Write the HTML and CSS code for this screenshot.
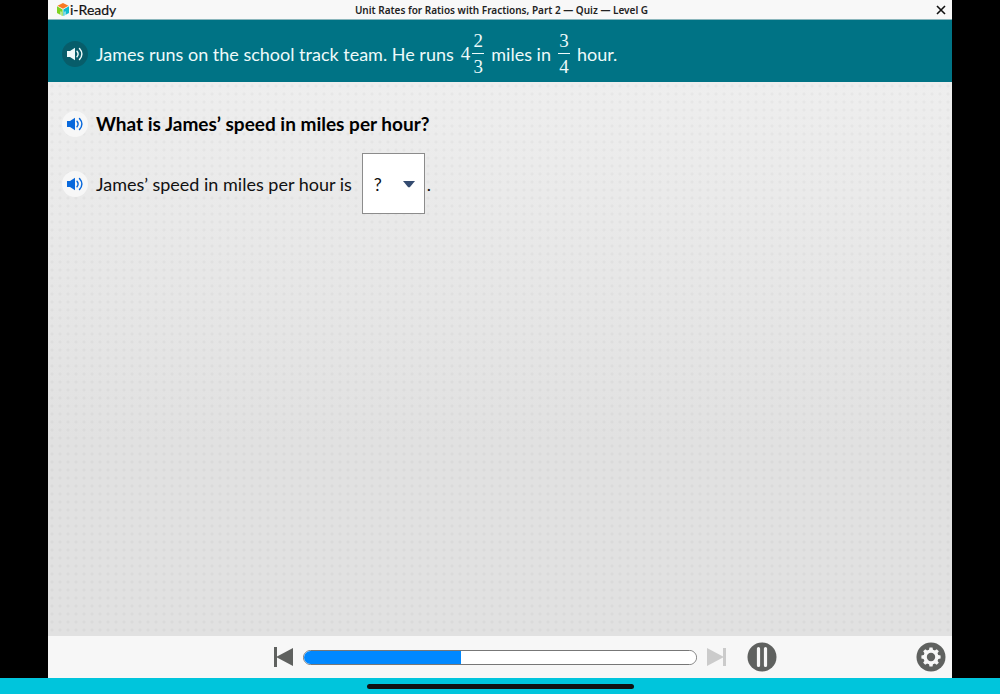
FILE: index.html
```html
<!DOCTYPE html>
<html lang="en">
<head>
<meta charset="utf-8">
<meta name="viewport" content="width=device-width, initial-scale=1">
<title>i-Ready Quiz</title>
<link rel="stylesheet" href="styles.css">
</head>
<body>
<svg class="defs" aria-hidden="true">
  <symbol id="speaker" viewBox="0 0 16 14">
    <path fill="currentColor" d="M0 4H3L8 .8V13.200L3 10H0Z"/>
    <path fill="none" stroke="currentColor" stroke-width="1.400" stroke-linecap="round" d="M10 4.200Q12.200 7 10 9.800M12.500 1.500Q17.300 7 12.500 12.500"/>
  </symbol>
</svg>
<div class="app">
  <header class="topbar">
    <div class="brand">
      <svg class="brand-mark" viewBox="0 0 12 13" aria-hidden="true">
        <path fill="#fb7a24" d="M6 0 11.500 2.800 6 5.800.5 2.800Z"/>
        <path fill="#7ed321" d="M0 3.300 5.600 6.400V13L0 9.900Z"/>
        <path fill="#10bcd0" d="M12 3.300 6.400 6.400V13L12 9.900Z"/>
        <path fill="#f8f8f8" d="M3.500 8.300 4.500 8.800V12.400L3.500 11.900ZM8.500 8.300 7.500 8.800V12.400L8.500 11.900Z"/>
      </svg>
      <span>i-Ready</span>
    </div>
    <h1 class="title">Unit Rates for Ratios with Fractions, Part 2 — Quiz — Level G</h1>
    <button class="close" aria-label="Close">
      <svg viewBox="0 0 10 10" aria-hidden="true"><path d="M1 1 9 9M9 1 1 9" stroke="currentColor" stroke-width="1.600"/></svg>
    </button>
  </header>

  <section class="prompt">
    <button class="audio audio-dark" aria-label="Read problem aloud"><svg aria-hidden="true"><use href="#speaker"/></svg></button>
    <p class="line">
      <span>James runs on the school track team. He runs</span>
      <span class="mixed">4<span class="fraction"><span class="top">2</span><span>3</span></span></span>
      <span>miles in</span>
      <span class="fraction"><span class="top">3</span><span>4</span></span>
      <span>hour.</span>
    </p>
  </section>

  <main class="work">
    <div class="row">
      <button class="audio" aria-label="Read question aloud"><svg aria-hidden="true"><use href="#speaker"/></svg></button>
      <h2 class="question">What is James’ speed in miles per hour?</h2>
    </div>
    <div class="row">
      <button class="audio" aria-label="Read answer aloud"><svg aria-hidden="true"><use href="#speaker"/></svg></button>
      <div class="answer">
        <label for="speed">James’ speed in miles per hour is</label>
        <span class="picker">
          <select id="speed"><option>?</option></select>
          <svg class="arrow" viewBox="0 0 12 7" aria-hidden="true"><path fill="#344b70" d="M0 0H12L6.800 6.300H5.200Z"/></svg>
        </span>
        <span>.</span>
      </div>
    </div>
  </main>

  <footer class="controls">
    <div class="before">
      <button class="step" aria-label="Previous"><svg viewBox="0 0 20 20" aria-hidden="true"><path fill="currentColor" d="M1 0H4V9.500L20 1V19L4 10.500V20H1Z"/></svg></button>
    </div>
    <progress class="progress" value="40" max="100" aria-label="Lesson progress">40%</progress>
    <div class="after">
      <button class="step" aria-label="Next" disabled><svg viewBox="0 0 20 20" aria-hidden="true"><path fill="currentColor" d="M0 1 16 9.500V1H19V19H16V10.500L0 19Z"/></svg></button>
      <button class="round pause" aria-label="Pause"><svg viewBox="0 0 30 30" aria-hidden="true"><circle cx="15" cy="15" r="14.500" fill="#5f615f"/><path d="M11.500 6.500V23.500M18.500 6.500V23.500" stroke="#f7f7f7" stroke-width="3.200" stroke-linecap="round"/></svg></button>
      <button class="round settings" aria-label="Settings"><svg viewBox="0 0 30 30" aria-hidden="true"><circle cx="15" cy="15" r="14.500" fill="#5f615f"/><g fill="#f7f7f7"><circle cx="15" cy="15" r="7.600"/><g id="teeth"><path d="M13.500 5.400H16.500L17.200 9V21L16.500 24.600H13.500L12.800 21V9Z"/><path d="M5.400 13.500V16.500L9 17.200H21L24.600 16.500V13.500L21 12.800H9Z"/></g><use href="#teeth" transform="rotate(45 15 15)"/></g><circle cx="15" cy="15" r="4.200" fill="#5f615f"/></svg></button>
    </div>
  </footer>
</div>
<div class="home"><span class="home-handle"></span></div>
</body>
</html>
```
FILE: styles.css
```css
* { box-sizing: border-box; }
body {
  margin: 0;
  min-height: 100vh;
  display: flex;
  flex-direction: column;
  background: #000;
  font-family: Lato, "Open Sans", sans-serif;
  font-size: 18px;
  line-height: 24px;
  color: #111;
}
p, h1, h2 { margin: 0; }
button { border: 0; padding: 0; background: none; color: inherit; display: grid; place-items: center; }
svg { display: block; }
.defs { position: absolute; width: 0; height: 0; }
.app { flex: 1; margin: 0 48px; display: flex; flex-direction: column; }

.topbar {
  display: grid;
  grid-template-columns: 1fr auto 1fr;
  align-items: center;
  height: 20px;
  padding: 0 6px 0 9px;
  background: #f8f8f8;
  border-bottom: 1px solid #8ab6bc;
}
.brand { display: flex; align-items: center; gap: 1px; font: 14px/18px Lato, sans-serif; -webkit-text-stroke: 0.2px; }
.brand-mark { width: 12px; height: 13px; }
.title { font: 600 10px/18px "Noto Sans", sans-serif; color: #222; }
.close { justify-self: end; width: 11px; height: 18px; }
.close svg { width: 10px; height: 10px; }

.prompt {
  display: flex;
  align-items: center;
  gap: 8px;
  min-height: 62px;
  padding: 5px 14px 0;
  background: #007385;
  color: #eefafa;
}
.line { display: flex; flex-wrap: wrap; align-items: center; gap: 7px; }
.mixed, .fraction { font-family: "Liberation Serif", serif; font-size: 19px; }
.mixed { display: flex; align-items: center; gap: 2px; }
.fraction { display: inline-flex; flex-direction: column; text-align: center; width: 12px; line-height: 25px; }
.top { border-bottom: 1px solid currentColor; }

.audio {
  flex: none;
  width: 26px;
  height: 26px;
  border-radius: 50%;
  background: #f7f7f7;
  color: #0969dc;
}
.audio svg { width: 16px; height: 14px; }
.audio-dark { background: #075d6a; color: #eefafa; }

.work {
  flex: 1;
  display: flex;
  flex-direction: column;
  gap: 16px;
  padding: 29px 14px;
  background:
    radial-gradient(circle, rgb(0 0 0 / 3%) 1px, transparent 2px) 0 0 / 8px 8px,
    linear-gradient(#eeeeee, #e1e1e1 65%);
}
.row { display: flex; align-items: center; gap: 8px; }
.question { font-size: 19px; line-height: 26px; font-weight: 700; color: #000; }
.answer { display: flex; flex-wrap: wrap; align-items: center; }
.picker { position: relative; margin: 0 2px 0 10px; }
.picker select {
  display: block;
  appearance: none;
  width: 63px;
  height: 61px;
  padding: 0 24px 0 11px;
  border: 1px solid #8c8c8c;
  border-radius: 0;
  background: #fff;
  color: #111;
  font: inherit;
}
.arrow { position: absolute; right: 10px; top: 28px; width: 12px; height: 7px; pointer-events: none; }

.controls {
  display: grid;
  grid-template-columns: 1fr minmax(0, 394px) 1fr;
  align-items: center;
  gap: 10px;
  height: 42px;
  padding: 0 6px;
  background: #f7f7f7;
}
.before { display: flex; justify-content: flex-end; }
.after { display: flex; align-items: center; }
.step { color: #5f615f; }
.step:disabled { color: #cbcbcb; }
.step svg { width: 20px; height: 20px; }
.round svg { width: 30px; height: 30px; }
.pause { margin-left: 20px; }
.settings { margin-left: auto; }
.progress {
  appearance: none;
  width: 100%;
  height: 15px;
  border: 1px solid #777;
  border-radius: 8px;
  overflow: hidden;
  background: #fff;
}
.progress::-webkit-progress-bar { background: #fff; }
.progress::-webkit-progress-value { background: #0088ff; }
.progress::-moz-progress-bar { background: #0088ff; }

.home { display: grid; place-items: center; height: 16px; background: #00c5dc; }
.home-handle { width: 267px; height: 5px; border-radius: 3px; background: #111; }
```
